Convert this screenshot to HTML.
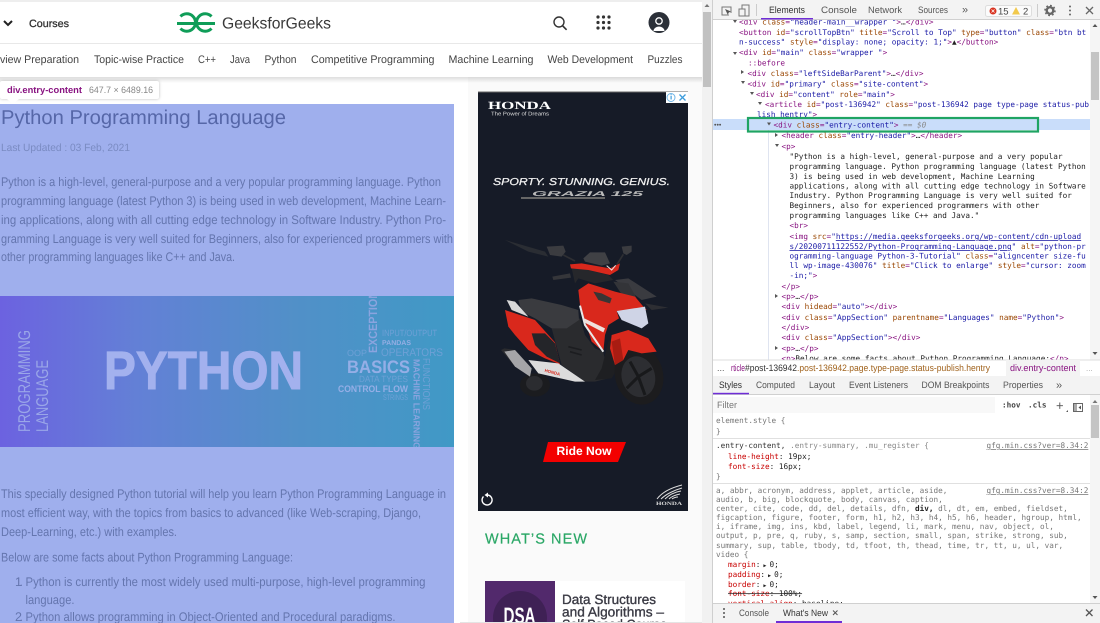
<!DOCTYPE html>
<html><head><meta charset="utf-8"><title>Python Programming Language</title>
<style>
html,body{margin:0;padding:0;background:#fff;width:1100px;height:623px;overflow:hidden}
svg{display:block;text-rendering:geometricPrecision}
text{font-family:"Liberation Sans",sans-serif;white-space:pre}
.m text,text.m{font-family:"DejaVu Sans Mono","Liberation Mono",monospace;font-size:7.69px;fill:#222}
.t{fill:#881280}.n{fill:#994500}.v{fill:#1a1aa6}.g{fill:#8a8a8a}.r{fill:#c80000}.u{text-decoration:underline}
.nav{font-size:11px;fill:#444}
.h{fill:#5768a8}.p{font-size:12.5px;fill:#6475ae}
.tab{font-size:9.3px;fill:#555}
</style></head><body>
<svg xmlns="http://www.w3.org/2000/svg" width="1100" height="623" viewBox="0 0 1100 623">
<defs>
<linearGradient id="ig" x1="0" x2="1" y1="0" y2="0"><stop offset="0" stop-color="#6c62e0"/><stop offset=".3" stop-color="#6380d6"/><stop offset=".65" stop-color="#5190c8"/><stop offset="1" stop-color="#4099c6"/></linearGradient>
<linearGradient id="sh" x1="0" x2="0" y1="0" y2="1"><stop offset="0" stop-color="#000" stop-opacity=".13"/><stop offset="1" stop-color="#000" stop-opacity="0"/></linearGradient>
<clipPath id="imgc"><rect x="0" y="296" width="454" height="151"/></clipPath>
<clipPath id="cardc"><rect x="485" y="581" width="200" height="41"/></clipPath>
<filter id="b" x="-20%" y="-20%" width="140%" height="140%"><feGaussianBlur stdDeviation="1.5"/></filter>
<filter id="s" x="-5%" y="-5%" width="110%" height="110%"><feGaussianBlur stdDeviation="1.2"/></filter>
</defs>

<!-- page -->
<rect width="702" height="623" fill="#fff"/>
<rect x="468" y="77" width="234" height="546" fill="#fafafa"/>
<rect width="702" height="2" fill="#eeeeee"/>
<rect y="43" width="702" height="1" fill="#e8e8e8"/>
<rect y="77" width="702" height="6" fill="url(#sh)"/>

<path d="M4 21l4 4 4-4" fill="none" stroke="#222" stroke-width="2"/>
<text x="29" y="27" font-size="10.5" fill="#333" stroke="#333" stroke-width=".3" textLength="40" lengthAdjust="spacingAndGlyphs">Courses</text>
<g fill="none" stroke="#0f9d58" stroke-width="3">
<path d="M180.500 16.500A8.700 8.700 0 1 1 180.500 28.500"/><path d="M177 23.500H195.500"/>
<path d="M211.500 16.500A8.700 8.700 0 1 0 211.500 28.500"/><path d="M196.500 23.500H215"/>
</g>
<text x="222" y="28.500" font-size="16" fill="#3a3a3a" textLength="109" lengthAdjust="spacingAndGlyphs">GeeksforGeeks</text>
<circle cx="559" cy="22" r="5" fill="none" stroke="#333" stroke-width="1.400"/><path d="M562.800 26l3.800 3.800" stroke="#333" stroke-width="1.600"/>
<g fill="#333"><circle cx="598" cy="17" r="1.600"/><circle cx="603.500" cy="17" r="1.600"/><circle cx="609" cy="17" r="1.600"/><circle cx="598" cy="22.500" r="1.600"/><circle cx="603.500" cy="22.500" r="1.600"/><circle cx="609" cy="22.500" r="1.600"/><circle cx="598" cy="28" r="1.600"/><circle cx="603.500" cy="28" r="1.600"/><circle cx="609" cy="28" r="1.600"/></g>
<circle cx="659" cy="22.500" r="10.500" fill="#2b3038"/><circle cx="659" cy="21" r="3.200" fill="none" stroke="#fff" stroke-width="1.300"/><path d="M653.500 31a5.500 4.500 0 0 1 11 0" fill="#fff"/>

<g class="nav">
<text class="nav" x="0" y="63" textLength="79" lengthAdjust="spacingAndGlyphs">view Preparation</text>
<text class="nav" x="94" y="63" textLength="90" lengthAdjust="spacingAndGlyphs">Topic-wise Practice</text>
<text class="nav" x="198" y="63" textLength="18" lengthAdjust="spacingAndGlyphs">C++</text>
<text class="nav" x="230" y="63" textLength="20" lengthAdjust="spacingAndGlyphs">Java</text>
<text class="nav" x="264.500" y="63" textLength="32" lengthAdjust="spacingAndGlyphs">Python</text>
<text class="nav" x="311" y="63" textLength="123.500" lengthAdjust="spacingAndGlyphs">Competitive Programming</text>
<text class="nav" x="448.500" y="63" textLength="85" lengthAdjust="spacingAndGlyphs">Machine Learning</text>
<text class="nav" x="547.500" y="63" textLength="85.500" lengthAdjust="spacingAndGlyphs">Web Development</text>
<text class="nav" x="647.500" y="63" textLength="35" lengthAdjust="spacingAndGlyphs">Puzzles</text>
</g>

<!-- highlighted article -->
<rect x="0" y="104" width="454" height="519" fill="#9fafed"/>
<rect x="0" y="81" width="159" height="18" rx="2" fill="#000" opacity=".25" filter="url(#b)"/>
<rect x="0" y="81" width="159" height="18" rx="2" fill="#fff"/>
<path d="M7 99h12l-6 5z" fill="#fff"/>
<text x="7" y="93" font-size="9.300" font-weight="bold" fill="#881280" textLength="75" lengthAdjust="spacingAndGlyphs">div.entry-content</text>
<text x="89" y="93" font-size="9.300" fill="#888" textLength="64" lengthAdjust="spacingAndGlyphs">647.7 × 6489.16</text>

<text x="1" y="124" font-size="20" fill="#5667a8" textLength="285" lengthAdjust="spacingAndGlyphs">Python Programming Language</text>
<text x="1" y="151" font-size="10.500" fill="#7a8bc2" textLength="129" lengthAdjust="spacingAndGlyphs">Last Updated : 03 Feb, 2021</text>
<text class="p" x="1" y="186" textLength="440" lengthAdjust="spacingAndGlyphs">Python is a high-level, general-purpose and a very popular programming language. Python</text>
<text class="p" x="1" y="205" textLength="445" lengthAdjust="spacingAndGlyphs">programming language (latest Python 3) is being used in web development, Machine Learn-</text>
<text class="p" x="1" y="224" textLength="445" lengthAdjust="spacingAndGlyphs">ing applications, along with all cutting edge technology in Software Industry. Python Pro-</text>
<text class="p" x="1" y="243" textLength="452" lengthAdjust="spacingAndGlyphs">gramming Language is very well suited for Beginners, also for experienced programmers with</text>
<text class="p" x="1" y="261" textLength="234" lengthAdjust="spacingAndGlyphs">other programming languages like C++ and Java.</text>

<!-- banner -->
<rect x="0" y="296" width="454" height="151" fill="url(#ig)"/>
<g clip-path="url(#imgc)">
<text x="104" y="389" font-size="54" font-weight="bold" fill="#a3b1ee" stroke="#a3b1ee" stroke-width="1" textLength="199" lengthAdjust="spacingAndGlyphs">PYTHON</text>
<text transform="translate(30 432) rotate(-90)" font-size="17" fill="#9aa6e8" textLength="102" lengthAdjust="spacingAndGlyphs">PROGRAMMING</text>
<text transform="translate(48 432) rotate(-90)" font-size="17" fill="#9aa6e8" textLength="72" lengthAdjust="spacingAndGlyphs">LANGUAGE</text>
<text transform="translate(377 353) rotate(-90)" font-size="12" font-weight="bold" fill="#8aa4df" textLength="62" lengthAdjust="spacingAndGlyphs">EXCEPTION</text>
<text x="382" y="336" font-size="9" fill="#6ea0d6" textLength="55" lengthAdjust="spacingAndGlyphs">INPUT/OUTPUT</text>
<text x="382" y="345" font-size="7" font-weight="bold" fill="#95aee4" textLength="29" lengthAdjust="spacingAndGlyphs">PANDAS</text>
<text x="381" y="356" font-size="11" fill="#6ea0d6" textLength="62" lengthAdjust="spacingAndGlyphs">OPERATORS</text>
<text x="347" y="356" font-size="9" fill="#6ea0d6" textLength="20" lengthAdjust="spacingAndGlyphs">OOP</text>
<text x="347" y="373" font-size="18" font-weight="bold" fill="#94aee6" textLength="63" lengthAdjust="spacingAndGlyphs">BASICS</text>
<text x="359" y="382" font-size="9" fill="#6ea0d6" textLength="49" lengthAdjust="spacingAndGlyphs">DATA TYPES</text>
<text x="338" y="392" font-size="9.500" font-weight="bold" fill="#94aee6" textLength="70" lengthAdjust="spacingAndGlyphs">CONTROL FLOW</text>
<text x="383" y="400" font-size="8" fill="#6ea0d6" textLength="25" lengthAdjust="spacingAndGlyphs">STRINGS</text>
<text transform="translate(413.500 359) rotate(90)" font-size="9" font-weight="bold" fill="#8aa4df" textLength="90" lengthAdjust="spacingAndGlyphs">MACHINE LEARNING</text>
<text transform="translate(423 358) rotate(90)" font-size="10" fill="#6ea0d6" textLength="52" lengthAdjust="spacingAndGlyphs">FUNCTIONS</text>
</g>

<text class="p" x="1" y="498" textLength="445" lengthAdjust="spacingAndGlyphs">This specially designed Python tutorial will help you learn Python Programming Language in</text>
<text class="p" x="1" y="517" textLength="420" lengthAdjust="spacingAndGlyphs">most efficient way, with the topics from basics to advanced (like Web-scraping, Django,</text>
<text class="p" x="1" y="536" textLength="176" lengthAdjust="spacingAndGlyphs">Deep-Learning, etc.) with examples.</text>
<text class="p" x="1" y="561.500" textLength="292" lengthAdjust="spacingAndGlyphs">Below are some facts about Python Programming Language:</text>
<text class="p" x="15" y="586" textLength="8">1.</text>
<text class="p" x="25.500" y="586" textLength="400" lengthAdjust="spacingAndGlyphs">Python is currently the most widely used multi-purpose, high-level programming</text>
<text class="p" x="25.500" y="604" textLength="49" lengthAdjust="spacingAndGlyphs">language.</text>
<text class="p" x="15" y="621" textLength="8">2.</text>
<text class="p" x="25.500" y="621" textLength="370" lengthAdjust="spacingAndGlyphs">Python allows programming in Object-Oriented and Procedural paradigms.</text>

<!-- ad -->
<rect x="478" y="92" width="210" height="419" fill="#161b27"/>
<rect x="478" y="91.500" width="210" height="1" fill="#666"/>
<text x="488" y="109" style="font-family:'Liberation Serif',serif" font-size="11" font-weight="bold" fill="#fff" textLength="63" lengthAdjust="spacingAndGlyphs">HONDA</text>
<text x="491" y="115.500" font-size="5.500" fill="#ddd" textLength="58" lengthAdjust="spacingAndGlyphs">The Power of Dreams</text>
<text x="493" y="185" font-size="10" font-style="italic" fill="#f0f0f0" stroke="#f0f0f0" stroke-width=".25" textLength="177" lengthAdjust="spacingAndGlyphs">SPORTY. STUNNING. GENIUS.</text>
<text x="532" y="196" font-size="7" font-style="italic" font-weight="bold" fill="#bbb" textLength="111" lengthAdjust="spacingAndGlyphs">GRAZIA 125</text>
<rect x="521" y="197" width="84" height="2" fill="#666"/>
<rect x="666" y="92" width="22" height="11" fill="#fff"/>
<circle cx="671" cy="97.500" r="4" fill="none" stroke="#6fb6e8" stroke-width="1"/><rect x="670.500" y="96" width="1.200" height="3.500" fill="#3b9bdc"/><rect x="670.500" y="94.300" width="1.200" height="1" fill="#3b9bdc"/>
<path d="M679.500 94.500l6 6m0-6l-6 6" stroke="#3b9bdc" stroke-width="1.300"/>

<!-- scooter (drawn at 3x, scaled) -->
<g transform="translate(495 235) scale(.33333)">
<polygon points="30,15 150,50 160,65 100,50" fill="#2a2d33"/>
<polygon points="360,135 400,130 485,185 440,195" fill="#3a3b40"/>
<polygon points="450,205 520,218 470,225" fill="#2d2e33"/>
<ellipse cx="120" cy="450" rx="45" ry="35" fill="#1b1c1f"/>
<ellipse cx="118" cy="445" rx="25" ry="22" fill="#2b2c30"/>
<path d="M205 60L240 78M385 58L365 90" stroke="#2e2f33" stroke-width="5"/>
<polygon points="155,35 205,32 212,50 200,65 165,60" fill="#3b3c40"/>
<polygon points="380,35 410,32 410,50 395,60 385,55" fill="#3b3c40"/>
<polygon points="172,125 225,115 228,128 175,135" fill="#35363a"/>
<polygon points="265,70 285,52 330,52 345,85 320,92 270,80" fill="#404145"/>
<polygon points="230,100 260,100 340,120 355,135 300,145 250,130 240,145" fill="#26272b"/>
<polygon points="225,88 260,85 345,100 375,85 370,105 345,120 280,105 228,100" fill="#d9281c"/>
<path d="M335 92l15 13 12-14" fill="none" stroke="#e6e6e6" stroke-width="3"/>
<polygon points="170,280 255,250 270,300 300,340 325,350 340,430 300,440 270,440 200,390" fill="#2a2b2e"/>
<path d="M220 335l40 10M225 350l35 10" stroke="#1c1d20" stroke-width="5"/>
<polygon points="70,195 110,190 200,210 250,225 252,255 215,280 170,280 120,250 80,230" fill="#3a3b3f"/>
<polygon points="35,195 60,200 100,245 50,225" fill="#d8d8d8"/>
<polygon points="30,225 120,255 180,322 195,388 150,370 100,345 60,300 40,275" fill="#d9281c"/>
<polygon points="110,295 150,295 180,325 195,385 155,365 120,330" fill="#242529"/>
<polygon points="18,345 28,340 60,345 110,400 105,425 60,395" fill="#2a2b2f"/>
<polygon points="28,350 60,345 110,400 105,425 60,395" fill="#a5a5a8"/>
<polygon points="100,375 190,385 270,440 240,440 130,415" fill="#dcdcdc"/>
<text x="148" y="410" font-size="13" font-weight="bold" fill="#d9281c" transform="rotate(15 148 410)">HONDA</text>
<polygon points="355,140 400,145 425,190 380,178" fill="#333438"/>
<polygon points="255,210 250,165 280,145 360,170 420,185 445,215 455,225 365,228 372,250 340,270 330,300 325,350 290,320" fill="#d9281c"/>
<polygon points="295,170 320,175 350,190 345,205 310,195" fill="#3a3534"/>
<path d="M255 212L270 270L325 350" fill="none" stroke="#e8e8e8" stroke-width="6"/>
<polygon points="268,250 330,280 325,292 268,262" fill="#f0e0dc"/>
<polygon points="365,228 450,215 460,265 440,280 380,255" fill="#cfd4e6"/>
<polygon points="340,320 360,300 380,380 350,430 300,435 320,400" fill="#1e1f22"/>
<ellipse cx="432" cy="420" rx="72" ry="90" transform="rotate(-15 432 420)" fill="#1c1c1e"/>
<ellipse cx="430" cy="425" rx="50" ry="62" transform="rotate(-15 430 425)" fill="#2d2e32"/>
<path d="M430 425L405 380M430 425L470 400M430 425L450 480M430 425L395 460" stroke="#18191b" stroke-width="9"/>
<polygon points="350,300 400,285 460,310 485,350 440,355 400,345 385,375 360,390 345,340" fill="#d9281c"/>
<polygon points="350,320 375,310 385,375 360,390" fill="#a81c12"/>
</g>

<polygon points="548,442 626,442 618,462 543,462" fill="#f30000"/>
<text x="556.500" y="455" font-size="12" font-weight="bold" fill="#fff" textLength="55" lengthAdjust="spacingAndGlyphs">Ride Now</text>
<path d="M483.500 496.500A5 5 0 1 0 487.500 495" fill="none" stroke="#fff" stroke-width="1.400"/><path d="M488 492.500v5l-3.500-2.500z" fill="#fff"/>
<g stroke="#ddd" stroke-width="1" fill="none"><path d="M682 485c-8 2-19 6-25 14"/><path d="M682 488c-7 2-16 6-21 11"/><path d="M681 491c-6 1-12 4-16 8"/><path d="M680 494c-5 1-9 3-11 5"/><path d="M678 497c-2 0-5 1-6 2"/></g>
<text x="656" y="505" font-size="5" font-weight="bold" fill="#ddd" textLength="26" lengthAdjust="spacingAndGlyphs" style="font-family:'Liberation Serif',serif">HONDA</text>

<text x="485" y="543.500" font-size="14.500" fill="#2aa766" stroke="#2aa766" stroke-width=".2" textLength="102" lengthAdjust="spacing">WHAT’S NEW</text>
<rect x="485" y="581" width="200" height="42" fill="#fff"/>
<g clip-path="url(#cardc)">
<rect x="485" y="581" width="70" height="42" fill="#52296c"/>
<circle cx="520" cy="618" r="27" fill="#3f2155"/>
<text x="503.500" y="623.500" font-size="23" font-weight="bold" fill="#fff" textLength="32" lengthAdjust="spacingAndGlyphs">DSA</text>
<text x="562" y="604" font-size="13.500" fill="#3b3b45" stroke="#3b3b45" stroke-width=".35" textLength="94" lengthAdjust="spacingAndGlyphs">Data Structures</text>
<text x="562" y="616.500" font-size="13.500" fill="#3b3b45" stroke="#3b3b45" stroke-width=".35" textLength="102" lengthAdjust="spacingAndGlyphs">and Algorithms –</text>
<text x="562" y="629" font-size="13.500" fill="#3b3b45" stroke="#3b3b45" stroke-width=".35" textLength="105" lengthAdjust="spacingAndGlyphs">Self Paced Course</text>
</g>
<rect x="460" y="622" width="242" height="1" fill="#e4e4e4"/>

<!-- page scrollbar -->
<rect x="702" y="0" width="10" height="623" fill="#f1f1f1"/>
<rect x="703" y="12" width="8" height="75" fill="#c1c1c1"/>
<path d="M707 4l2.500 3h-5z" fill="#777"/>
<rect x="712" y="0" width="1" height="623" fill="#cfcfcf"/>

<!-- devtools DOM -->
<rect x="713" y="19" width="387" height="341" fill="#fff"/>
<rect x="713" y="119" width="377" height="11" fill="#c9ddfa"/>
<rect x="768" y="130" width="1" height="230" fill="#dfe4f0"/>
<g class="m">
<text x="739" y="24.500"><tspan class="t">&lt;div</tspan> <tspan class="n">class</tspan><tspan class="t">=</tspan><tspan class="v">"header-main__wrapper "</tspan><tspan class="t">&gt;</tspan>…<tspan class="t">&lt;/div&gt;</tspan></text>
<text x="739" y="35"><tspan class="t">&lt;button</tspan> <tspan class="n">id</tspan><tspan class="t">=</tspan><tspan class="v">"scrollTopBtn"</tspan> <tspan class="n">title</tspan><tspan class="t">=</tspan><tspan class="v">"Scroll to Top"</tspan> <tspan class="n">type</tspan><tspan class="t">=</tspan><tspan class="v">"button"</tspan> <tspan class="n">class</tspan><tspan class="t">=</tspan><tspan class="v">"btn bt</tspan></text>
<text x="739" y="44.500"><tspan class="v">n-success"</tspan> <tspan class="n">style</tspan><tspan class="t">=</tspan><tspan class="v">"display: none; opacity: 1;"</tspan><tspan class="t">&gt;</tspan>▲<tspan class="t">&lt;/button&gt;</tspan></text>
<text x="739" y="55"><tspan class="t">&lt;div</tspan> <tspan class="n">id</tspan><tspan class="t">=</tspan><tspan class="v">"main"</tspan> <tspan class="n">class</tspan><tspan class="t">=</tspan><tspan class="v">"wrapper "</tspan><tspan class="t">&gt;</tspan></text>
<text x="748" y="65.500"><tspan class="t">::before</tspan></text>
<text x="747.500" y="76"><tspan class="t">&lt;div</tspan> <tspan class="n">class</tspan><tspan class="t">=</tspan><tspan class="v">"leftSideBarParent"</tspan><tspan class="t">&gt;</tspan>…<tspan class="t">&lt;/div&gt;</tspan></text>
<text x="747.500" y="86.500"><tspan class="t">&lt;div</tspan> <tspan class="n">id</tspan><tspan class="t">=</tspan><tspan class="v">"primary"</tspan> <tspan class="n">class</tspan><tspan class="t">=</tspan><tspan class="v">"site-content"</tspan><tspan class="t">&gt;</tspan></text>
<text x="756" y="97"><tspan class="t">&lt;div</tspan> <tspan class="n">id</tspan><tspan class="t">=</tspan><tspan class="v">"content"</tspan> <tspan class="n">role</tspan><tspan class="t">=</tspan><tspan class="v">"main"</tspan><tspan class="t">&gt;</tspan></text>
<text x="765" y="107"><tspan class="t">&lt;article</tspan> <tspan class="n">id</tspan><tspan class="t">=</tspan><tspan class="v">"post-136942"</tspan> <tspan class="n">class</tspan><tspan class="t">=</tspan><tspan class="v">"post-136942 page type-page status-pub</tspan></text>
<text x="757" y="117"><tspan class="v">lish hentry"</tspan><tspan class="t">&gt;</tspan></text>
<text x="773.500" y="127.500"><tspan class="t">&lt;div</tspan> <tspan class="n">class</tspan><tspan class="t">=</tspan><tspan class="v">"entry-content"</tspan><tspan class="t">&gt;</tspan> <tspan class="g" font-style="italic">== $0</tspan></text>
<text x="781.500" y="138"><tspan class="t">&lt;header</tspan> <tspan class="n">class</tspan><tspan class="t">=</tspan><tspan class="v">"entry-header"</tspan><tspan class="t">&gt;</tspan>…<tspan class="t">&lt;/header&gt;</tspan></text>
<text x="781.500" y="149"><tspan class="t">&lt;p&gt;</tspan></text>
<text x="789.500" y="159">"Python is a high-level, general-purpose and a very popular</text>
<text x="789.500" y="169">programming language. Python programming language (latest Python</text>
<text x="789.500" y="179">3) is being used in web development, Machine Learning</text>
<text x="789.500" y="188.500">applications, along with all cutting edge technology in Software</text>
<text x="789.500" y="198">Industry. Python Programming Language is very well suited for</text>
<text x="789.500" y="208">Beginners, also for experienced programmers with other</text>
<text x="789.500" y="218">programming languages like C++ and Java."</text>
<text x="789.500" y="228"><tspan class="t">&lt;br&gt;</tspan></text>
<text x="789.500" y="239"><tspan class="t">&lt;img</tspan> <tspan class="n">src</tspan><tspan class="t">=</tspan><tspan class="v">"</tspan><tspan class="v u">https://media.geeksforgeeks.org/wp-content/cdn-upload</tspan></text>
<text x="789.500" y="249"><tspan class="v u">s/20200711122552/Python-Programming-Language.png</tspan><tspan class="v">"</tspan> <tspan class="n">alt</tspan><tspan class="t">=</tspan><tspan class="v">"python-pr</tspan></text>
<text x="789.500" y="258.500"><tspan class="v">ogramming-language Python-3-Tutorial"</tspan> <tspan class="n">class</tspan><tspan class="t">=</tspan><tspan class="v">"aligncenter size-fu</tspan></text>
<text x="789.500" y="268"><tspan class="v">ll wp-image-430076"</tspan> <tspan class="n">title</tspan><tspan class="t">=</tspan><tspan class="v">"Click to enlarge"</tspan> <tspan class="n">style</tspan><tspan class="t">=</tspan><tspan class="v">"cursor: zoom</tspan></text>
<text x="789.500" y="278"><tspan class="v">-in;"</tspan><tspan class="t">&gt;</tspan></text>
<text x="781.500" y="289"><tspan class="t">&lt;/p&gt;</tspan></text>
<text x="781.500" y="299"><tspan class="t">&lt;p&gt;</tspan>…<tspan class="t">&lt;/p&gt;</tspan></text>
<text x="781.500" y="309"><tspan class="t">&lt;div</tspan> <tspan class="n">hidead</tspan><tspan class="t">=</tspan><tspan class="v">"auto"</tspan><tspan class="t">&gt;&lt;/div&gt;</tspan></text>
<text x="781.500" y="320"><tspan class="t">&lt;div</tspan> <tspan class="n">class</tspan><tspan class="t">=</tspan><tspan class="v">"AppSection"</tspan> <tspan class="n">parentname</tspan><tspan class="t">=</tspan><tspan class="v">"Languages"</tspan> <tspan class="n">name</tspan><tspan class="t">=</tspan><tspan class="v">"Python"</tspan><tspan class="t">&gt;</tspan></text>
<text x="781.500" y="330"><tspan class="t">&lt;/div&gt;</tspan></text>
<text x="781.500" y="340"><tspan class="t">&lt;div</tspan> <tspan class="n">class</tspan><tspan class="t">=</tspan><tspan class="v">"AppSection"</tspan><tspan class="t">&gt;&lt;/div&gt;</tspan></text>
<text x="781.500" y="351"><tspan class="t">&lt;p&gt;</tspan>…<tspan class="t">&lt;/p&gt;</tspan></text>
<text x="781.500" y="361"><tspan class="t">&lt;p&gt;</tspan>Below are some facts about Python Programming Language:<tspan class="t">&lt;/p&gt;</tspan></text>
</g>
<g fill="#555">
<path d="M733 20l4 0-2 3z"/><path d="M733 52l4 0-2 3z"/>
<path d="M741 70l3 2-3 2z"/><path d="M741 81l4 0-2 3z"/><path d="M750 92l4 0-2 3z"/><path d="M758 102l4 0-2 3z"/><path d="M767 122.500l4 0-2 3z"/>
<path d="M775 133l3 2-3 2z"/><path d="M775 144l4 0-2 3z"/><path d="M775 294l3 2-3 2z"/><path d="M775 346l3 2-3 2z"/>
</g>
<text x="714" y="127" font-size="7" fill="#555">•••</text>
<rect x="748" y="118" width="290" height="13.500" fill="none" stroke="#1fa463" stroke-width="2.200"/>

<rect x="1090" y="19" width="10" height="341" fill="#f5f5f5"/>
<rect x="1091" y="52" width="8" height="48" fill="#c4c4c4"/>
<path d="M1095 24l2.500 3h-5z" fill="#555"/><path d="M1095 355l2.500-3h-5z" fill="#555"/>

<!-- toolbar -->
<rect x="713" y="0" width="387" height="19" fill="#f3f3f3"/>
<rect x="713" y="19" width="387" height="1" fill="#d0d0d0"/>
<path d="M729 15h-7v-8h9v6" fill="none" stroke="#777" stroke-width="1"/><path d="M725 9l6 2.500-2.200 1-1 2.300z" fill="#555"/>
<rect x="739" y="9" width="6" height="7" fill="none" stroke="#777"/><path d="M742 9V5h7v11h-4" fill="none" stroke="#777"/>
<rect x="756" y="4" width="1" height="12" fill="#ccc"/>
<text class="tab" x="769" y="13" style="fill:#333" textLength="36" lengthAdjust="spacingAndGlyphs">Elements</text>
<rect x="761" y="18" width="52" height="1.500" fill="#6f2dd6"/>
<text class="tab" x="821" y="13" textLength="36" lengthAdjust="spacingAndGlyphs">Console</text>
<text class="tab" x="868" y="13" textLength="34" lengthAdjust="spacingAndGlyphs">Network</text>
<text class="tab" x="918" y="13" textLength="30" lengthAdjust="spacingAndGlyphs">Sources</text>
<text x="962" y="13" font-size="11" fill="#555">»</text>
<rect x="985.500" y="5.500" width="46" height="11" rx="2" fill="#fbfbfb" stroke="#ddd"/>
<circle cx="993" cy="11" r="3.500" fill="#d8321f"/><path d="M991.500 9.500l3 3m0-3l-3 3" stroke="#fff" stroke-width=".8"/>
<text x="998" y="14.500" font-size="9.500" fill="#444">15</text>
<path d="M1016 7l4 7.500h-8z" fill="#f2c94c"/>
<text x="1023" y="14.500" font-size="9.500" fill="#444">2</text>
<rect x="1037" y="4" width="1" height="13" fill="#ccc"/>
<circle cx="1050" cy="10.500" r="3.300" fill="none" stroke="#666" stroke-width="2.400"/><circle cx="1050" cy="10.500" r="5" fill="none" stroke="#666" stroke-width="1.500" stroke-dasharray="1.800 2.100"/>
<g fill="#666"><circle cx="1070" cy="6.500" r="1"/><circle cx="1070" cy="10.500" r="1"/><circle cx="1070" cy="14.500" r="1"/></g>
<path d="M1086 7l7 7m0-7l-7 7" stroke="#666" stroke-width="1.300"/>

<!-- breadcrumb -->
<rect x="713" y="359.500" width="387" height="17" fill="#fff"/>
<rect x="713" y="359.500" width="387" height="1" fill="#ddd"/>
<text x="717" y="371" font-size="9" fill="#555">...</text>
<text x="731" y="371" font-size="9.300" fill="#881280" textLength="14" lengthAdjust="spacingAndGlyphs">rticle</text>
<text x="745" y="371" font-size="9.300" fill="#333" textLength="52" lengthAdjust="spacingAndGlyphs">#post-136942</text>
<text x="797" y="371" font-size="9.300" fill="#a0621c" textLength="193" lengthAdjust="spacingAndGlyphs">.post-136942.page.type-page.status-publish.hentry</text>
<rect x="1006" y="360" width="74" height="16" fill="#f3f3f3"/>
<text x="1010" y="371" font-size="9.300" fill="#881280" textLength="66" lengthAdjust="spacingAndGlyphs">div.entry-content</text>
<text x="1086" y="371" font-size="8" fill="#aaa">...</text>

<!-- styles tabs -->
<rect x="713" y="376" width="387" height="18" fill="#f3f3f3"/>
<rect x="713" y="394" width="387" height="1" fill="#d0d0d0"/>
<rect x="713" y="392.800" width="36" height="1.500" fill="#6f2dd6"/>
<text class="tab" x="719" y="388" style="fill:#333" textLength="23" lengthAdjust="spacingAndGlyphs">Styles</text>
<text class="tab" x="756" y="388" textLength="39" lengthAdjust="spacingAndGlyphs">Computed</text>
<text class="tab" x="809" y="388" textLength="26" lengthAdjust="spacingAndGlyphs">Layout</text>
<text class="tab" x="849" y="388" textLength="59" lengthAdjust="spacingAndGlyphs">Event Listeners</text>
<text class="tab" x="921.500" y="388" textLength="68" lengthAdjust="spacingAndGlyphs">DOM Breakpoints</text>
<text class="tab" x="1003" y="388" textLength="40" lengthAdjust="spacingAndGlyphs">Properties</text>
<text x="1056" y="388.500" font-size="11" fill="#555">»</text>

<!-- styles pane -->
<rect x="713" y="395" width="387" height="208" fill="#fff"/>
<rect x="713" y="397" width="282" height="16" fill="#f8f8f8"/>
<text x="717" y="408" font-size="9.300" fill="#777" textLength="20" lengthAdjust="spacingAndGlyphs">Filter</text>
<g class="m">
<text x="1002" y="407.500" font-weight="bold" style="fill:#444">:hov</text>
<text x="1028" y="407.500" font-weight="bold" style="fill:#444">.cls</text>
<text x="716" y="423" style="fill:#777">element.style {</text>
<text x="716" y="434" style="fill:#777">}</text>
<text x="716" y="448"><tspan style="fill:#333">.entry-content,</tspan> <tspan class="g">.entry-summary, .mu_register {</tspan></text>
<text x="986.500" y="448" class="g u" style="fill:#777">gfg.min.css?ver=8.34:2</text>
<text x="728" y="459"><tspan class="r">line-height</tspan>: 19px;</text>
<text x="728" y="469"><tspan class="r">font-size</tspan>: 16px;</text>
<text x="716" y="479" style="fill:#777">}</text>
<text x="716" y="493" style="fill:#777">a, abbr, acronym, address, applet, article, aside,</text>
<text x="986.500" y="493" class="g u" style="fill:#777">gfg.min.css?ver=8.34:2</text>
<text x="716" y="502" style="fill:#777">audio, b, big, blockquote, body, canvas, caption,</text>
<text x="716" y="511" style="fill:#777">center, cite, code, dd, del, details, dfn, <tspan style="fill:#222;font-weight:bold">div,</tspan> dl, dt, em, embed, fieldset,</text>
<text x="716" y="520" style="fill:#777">figcaption, figure, footer, form, h1, h2, h3, h4, h5, h6, header, hgroup, html,</text>
<text x="716" y="529" style="fill:#777">i, iframe, img, ins, kbd, label, legend, li, mark, menu, nav, object, ol,</text>
<text x="716" y="538" style="fill:#777">output, p, pre, q, ruby, s, samp, section, small, span, strike, strong, sub,</text>
<text x="716" y="548" style="fill:#777">summary, sup, table, tbody, td, tfoot, th, thead, time, tr, tt, u, ul, var,</text>
<text x="716" y="557" style="fill:#777">video {</text>
<text x="728" y="567"><tspan class="r">margin</tspan>:<tspan font-size="5"> ▶ </tspan>0;</text>
<text x="728" y="577"><tspan class="r">padding</tspan>:<tspan font-size="5"> ▶ </tspan>0;</text>
<text x="728" y="587"><tspan class="r">border</tspan>:<tspan font-size="5"> ▶ </tspan>0;</text>
<text x="728" y="596" text-decoration="line-through"><tspan class="r">font-size</tspan>: 100%;</text>
<text x="728" y="606"><tspan class="r">vertical-align</tspan>: baseline;</text>
</g>
<text x="1056" y="410" font-size="13" fill="#555">+</text>
<path d="M1066 412h2v-2z" fill="#555"/>
<rect x="1073.500" y="403.500" width="9" height="8" fill="none" stroke="#666"/><rect x="1074" y="404" width="3" height="7" fill="#aaa"/><path d="M1081 405.500v4l-2.500-2z" fill="#555"/>
<rect x="713" y="438" width="377" height="1" fill="#e0e0e0"/>
<rect x="713" y="483" width="377" height="1" fill="#e0e0e0"/>
<rect x="1090" y="395" width="10" height="208" fill="#f5f5f5"/>
<rect x="1091" y="405" width="8" height="33" fill="#c4c4c4"/>
<path d="M1095 400l2.500 3h-5z" fill="#777"/><path d="M1095 599l2.500-3h-5z" fill="#555"/>

<!-- drawer -->
<rect x="713" y="603" width="387" height="20" fill="#f3f3f3"/>
<rect x="713" y="603" width="387" height="1" fill="#d0d0d0"/>
<g fill="#555"><circle cx="724" cy="609" r="1"/><circle cx="724" cy="613" r="1"/><circle cx="724" cy="617" r="1"/></g>
<text class="tab" x="739" y="616" textLength="30" lengthAdjust="spacingAndGlyphs">Console</text>
<text class="tab" x="783" y="616" style="fill:#333" textLength="45" lengthAdjust="spacingAndGlyphs">What's New</text>
<path d="M833 610.500l4.500 4.500m0-4.500l-4.500 4.500" stroke="#555"/>
<rect x="776" y="621" width="66" height="2" fill="#6f2dd6"/>
<path d="M1086 609.500l6.500 6.500m0-6.500l-6.500 6.500" stroke="#555" stroke-width="1.300"/>
</svg>
</body></html>
